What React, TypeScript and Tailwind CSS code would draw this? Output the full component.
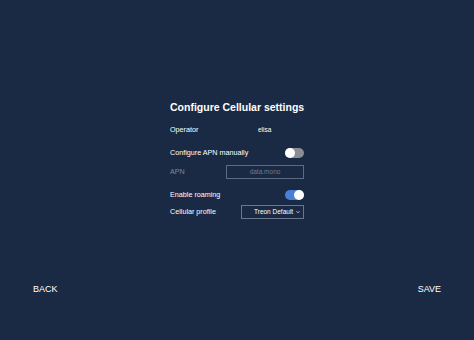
export default function App() {
  return (
    <div className="w-[474px] h-[340px] bg-[#1b2a44] flex flex-col text-white" style={{ fontFamily: '"Liberation Sans", Arial, sans-serif' }}>
      <div className="flex-1 flex justify-center pt-[100px]">
        <div className="w-[134px] flex flex-col">
          <h1 className="text-[10.5px] font-bold leading-[14px] whitespace-nowrap">Configure Cellular settings</h1>
          <div className="flex items-center h-[12px] mt-[10px] text-[7.2px]">
            <span className="w-[88px]">Operator</span>
            <span className="text-[6.5px]">elisa</span>
          </div>
          <div className="flex items-center justify-between h-[12px] mt-[11px] text-[7.2px]">
            <span>Configure APN manually</span>
            <span className="w-[19px] h-[10px] rounded-full bg-[#8a8d93] relative">
              <span className="absolute left-0 top-0 w-[10px] h-[10px] rounded-full bg-white" />
            </span>
          </div>
          <div className="flex items-center justify-between h-[14px] mt-[6px] text-[7.2px]">
            <span className="text-[#7d8797]">APN</span>
            <div className="w-[78px] h-[14px] border border-[#5d6b80] flex items-center justify-center text-[6.5px] text-[#6f7a8c]">data.mono</div>
          </div>
          <div className="flex items-center justify-between h-[12px] mt-[10px] text-[7.2px]">
            <span>Enable roaming</span>
            <span className="w-[19px] h-[10px] rounded-full bg-[#4a7fd6] relative">
              <span className="absolute right-0 top-0 w-[10px] h-[10px] rounded-full bg-white" />
            </span>
          </div>
          <div className="flex items-center justify-between h-[14px] mt-[4px] text-[7.2px]">
            <span>Cellular profile</span>
            <div className="w-[63px] h-[14px] border border-[#6a7689] flex items-center text-[6.5px] pl-[12px] pr-[2px]">
              <span className="flex-1">Treon Default</span>
              <svg width="6" height="6" viewBox="0 0 24 24" fill="none" stroke="currentColor" strokeWidth="3">
                <path d="M6 9l6 6 6-6" />
              </svg>
            </div>
          </div>
        </div>
      </div>
      <div className="flex justify-between px-[33px] pb-[44px] text-[9px]">
        <span>BACK</span>
        <span>SAVE</span>
      </div>
    </div>
  )
}
